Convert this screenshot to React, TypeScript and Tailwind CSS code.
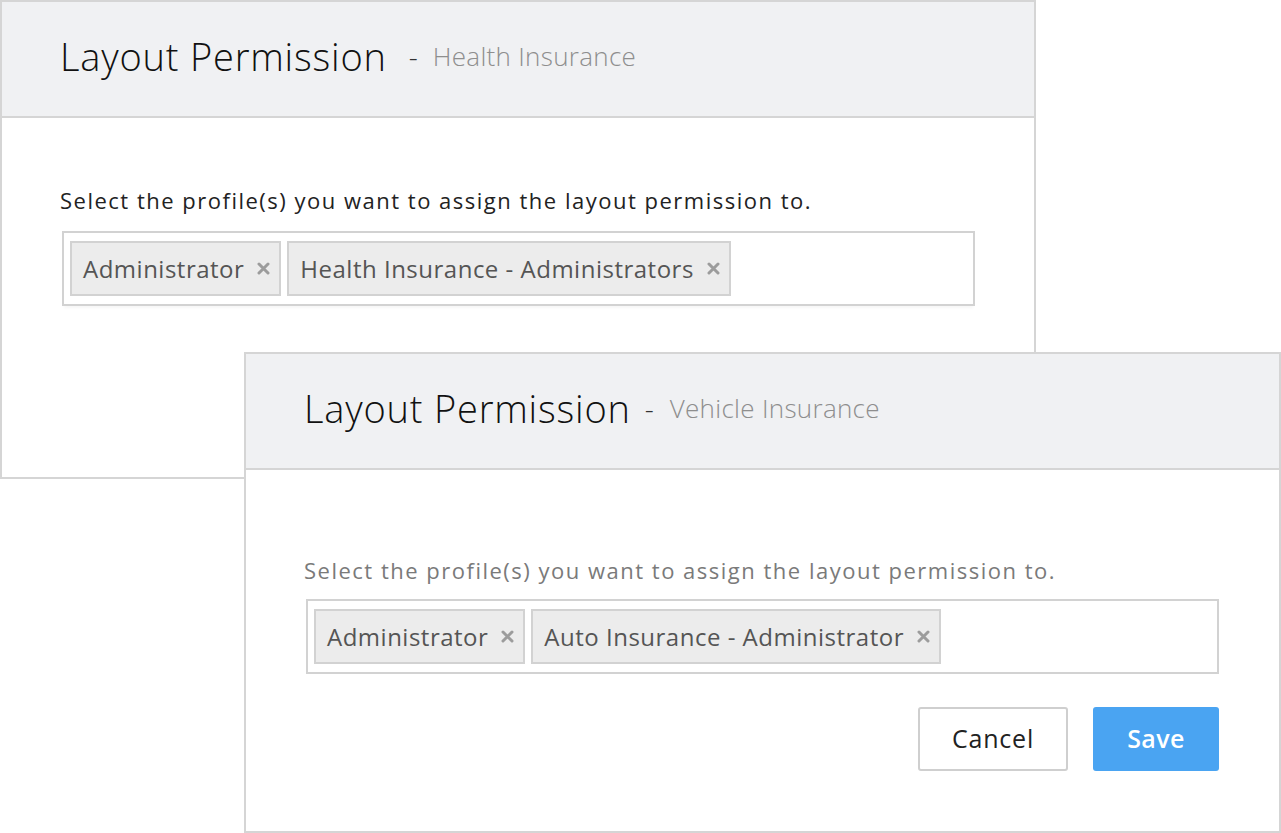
const font = { fontFamily: '"Open Sans", Lato, sans-serif' }

const Tag: React.FC<{ label: string }> = ({ label }) => {
  return (
    <div className="flex items-center h-[55px] pl-[11px] pr-[9px] bg-[#ececec] border-2 border-[#d2d2d2] text-[24px] tracking-[0.5px] text-[#555]">
      <span>{label}</span>
      <svg className="ml-[13px]" width="13" height="13" viewBox="0 0 13 13">
        <path d="M2 2 L11 11 M11 2 L2 11" stroke="#9c9c9c" strokeWidth="3" strokeLinecap="round" />
      </svg>
    </div>
  )
}

const PermissionCard: React.FC<{
  subtitle: string
  tags: string[]
  muted?: boolean
  actions?: boolean
  className: string
}> = ({ subtitle, tags, muted, actions, className }) => {
  return (
    <div className={`absolute bg-white border-2 border-[#d5d5d5] flex flex-col ${className}`}>
      <div className="h-[116px] shrink-0 bg-[#f0f1f3] border-b-2 border-[#d5d5d5] flex items-center px-[58px] pb-[6px]">
        <h1 className="text-[38px] font-light tracking-[0.8px] text-[#111]">Layout Permission</h1>
        <span className={`${muted ? "ml-[14px]" : "ml-[22px]"} text-[28px] font-light text-[#333]`}>-</span>
        <span className={`${muted ? "ml-[16px]" : "ml-[15px]"} text-[26px] font-light tracking-[0.3px] text-[#8e8e8e]`}>
          {subtitle}
        </span>
      </div>
      <div className={`px-[58px] ${muted ? "pt-[85px]" : "pt-[67px]"}`}>
        <p className={`text-[22px] leading-[30px] tracking-[1.5px] ${muted ? "text-[#7a7a7a]" : "text-[#222]"}`}>
          Select the profile(s) you want to assign the layout permission to.
        </p>
        <div
          className={`${muted ? "mt-[14px]" : "mt-[16px]"} ml-[2px] w-[913px] h-[75px] border-2 border-[#d2d2d2] flex items-center gap-[6px] px-[6px] ${
            muted ? "" : "shadow-[0_4px_3px_-2px_rgba(0,0,0,0.04)]"
          }`}
        >
          {tags.map((t) => (
            <Tag key={t} label={t} />
          ))}
        </div>
        {actions && (
          <div className="flex justify-end gap-[25px] mt-[33px] w-[915px]">
            <button className="w-[150px] h-[64px] border-2 border-[#cfcfcf] rounded-[3px] bg-white text-[25px] tracking-[0.8px] text-[#222]">
              Cancel
            </button>
            <button className="w-[126px] h-[64px] rounded-[3px] bg-[#4aa4f2] text-[25px] font-semibold tracking-[0.4px] text-white">
              Save
            </button>
          </div>
        )}
      </div>
    </div>
  )
}

export default function App() {
  return (
    <div className="relative w-[1281px] h-[833px] bg-white overflow-hidden" style={font}>
      <PermissionCard
        className="left-0 top-0 w-[1036px] h-[479px]"
        subtitle="Health Insurance"
        tags={["Administrator", "Health Insurance - Administrators"]}
      />
      <PermissionCard
        className="left-[244px] top-[352px] w-[1037px] h-[481px]"
        subtitle="Vehicle Insurance"
        tags={["Administrator", "Auto Insurance - Administrator"]}
        muted
        actions
      />
    </div>
  )
}
